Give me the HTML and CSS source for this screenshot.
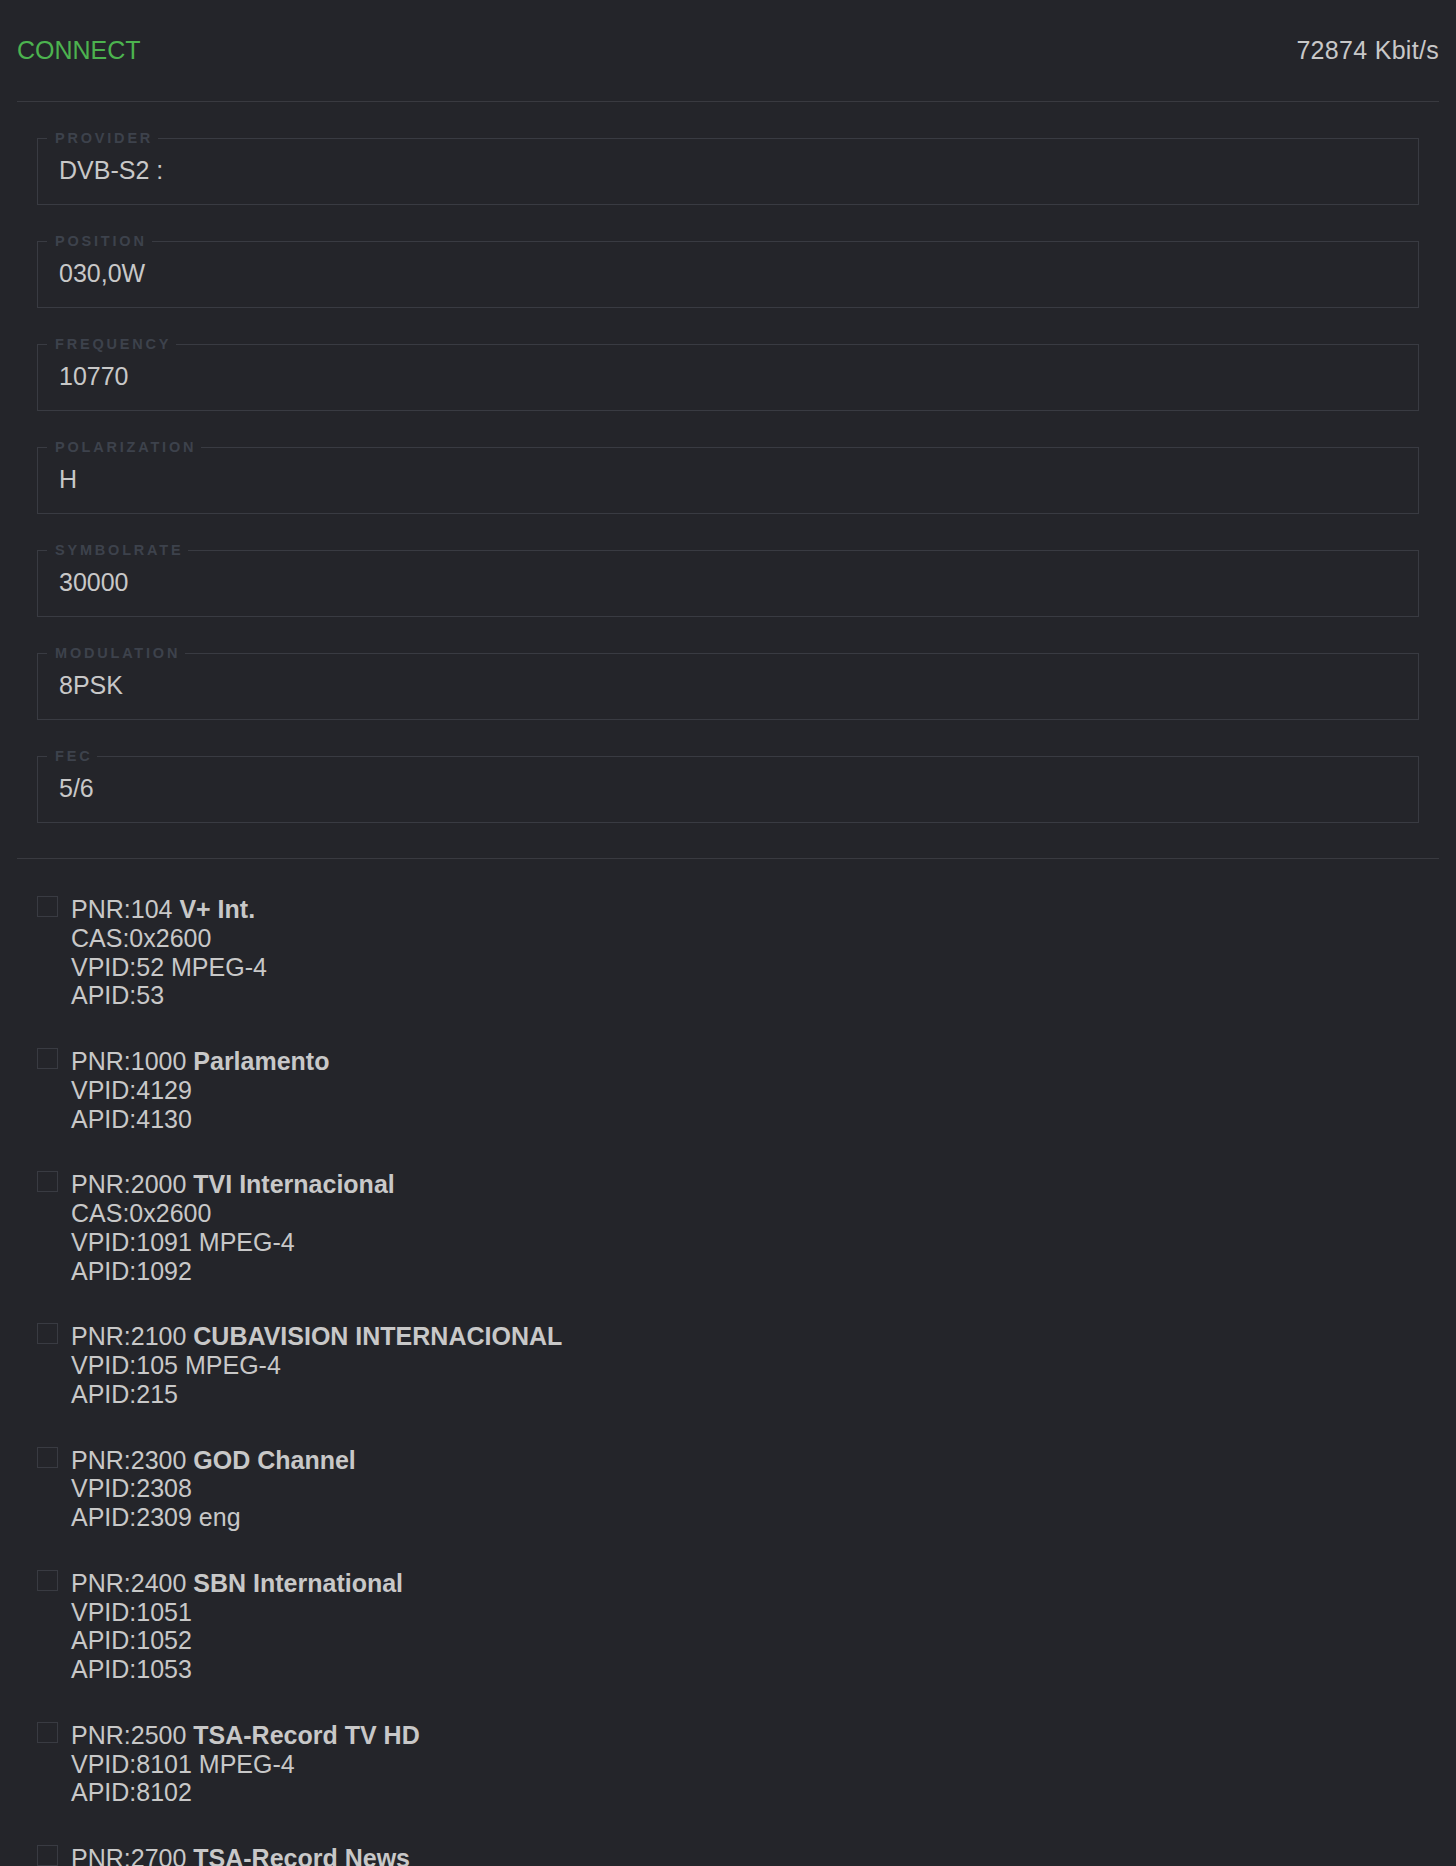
FILE: index.html
```html
<!DOCTYPE html>
<html lang="en">
<head>
    <meta charset="UTF-8">
    <meta name="viewport" content="width=device-width, initial-scale=1.0">
    <title>Transponder</title>
    <link rel="stylesheet" href="styles.css">
</head>
<body>
    <div class="page">
        <div class="header">
            <span class="status">CONNECT</span>
            <span class="rate">72874 Kbit/s</span>
        </div>

        <!-- tuning params -->
        <div class="tuning">
            <fieldset>
                <legend>PROVIDER</legend>
                <div class="value">DVB-S2 :</div>
            </fieldset>
            <fieldset>
                <legend>POSITION</legend>
                <div class="value">030,0W</div>
            </fieldset>
            <fieldset>
                <legend>FREQUENCY</legend>
                <div class="value">10770</div>
            </fieldset>
            <fieldset>
                <legend>POLARIZATION</legend>
                <div class="value">H</div>
            </fieldset>
            <fieldset>
                <legend>SYMBOLRATE</legend>
                <div class="value">30000</div>
            </fieldset>
            <fieldset>
                <legend>MODULATION</legend>
                <div class="value">8PSK</div>
            </fieldset>
            <fieldset>
                <legend>FEC</legend>
                <div class="value">5/6</div>
            </fieldset>
        </div>

        <!-- channels -->
        <ul class="channels">
            <li>
                <span class="check"></span>
                <div class="info">
                    PNR:104 <b>V+ Int.</b><br>
                    CAS:0x2600<br>
                    VPID:52 MPEG-4<br>
                    APID:53
                </div>
            </li>
            <li>
                <span class="check"></span>
                <div class="info">
                    PNR:1000 <b>Parlamento</b><br>
                    VPID:4129<br>
                    APID:4130
                </div>
            </li>
            <li>
                <span class="check"></span>
                <div class="info">
                    PNR:2000 <b>TVI Internacional</b><br>
                    CAS:0x2600<br>
                    VPID:1091 MPEG-4<br>
                    APID:1092
                </div>
            </li>
            <li>
                <span class="check"></span>
                <div class="info">
                    PNR:2100 <b>CUBAVISION INTERNACIONAL</b><br>
                    VPID:105 MPEG-4<br>
                    APID:215
                </div>
            </li>
            <li>
                <span class="check"></span>
                <div class="info">
                    PNR:2300 <b>GOD Channel</b><br>
                    VPID:2308<br>
                    APID:2309 eng
                </div>
            </li>
            <li>
                <span class="check"></span>
                <div class="info">
                    PNR:2400 <b>SBN International</b><br>
                    VPID:1051<br>
                    APID:1052<br>
                    APID:1053
                </div>
            </li>
            <li>
                <span class="check"></span>
                <div class="info">
                    PNR:2500 <b>TSA-Record TV HD</b><br>
                    VPID:8101 MPEG-4<br>
                    APID:8102
                </div>
            </li>
            <li>
                <span class="check"></span>
                <div class="info">
                    PNR:2700 <b>TSA-Record News</b>
                </div>
            </li>
        </ul>
    </div>
</body>
</html>
```

FILE: styles.css
```css
body {
    margin: 0;
    background: #24252a;
    color: #c8c8c8;
    font-family: "Liberation Sans", Arial, Helvetica, sans-serif;
    font-size: 25px;
}

.page {
    padding: 0 17px;
}

.header {
    display: flex;
    justify-content: space-between;
    padding: 36px 0;
    line-height: 29px;
    border-bottom: 1px solid #393a40;
}

.status {
    color: #4cb34f;
}

.rate {
    letter-spacing: 0.3px;
}

.tuning {
    padding: 28px 20px 7px;
    border-bottom: 1px solid #393a40;
}

fieldset {
    margin: 0 0 28px;
    padding: 10px 9px 19px;
    border: 1px solid #393b42;
}

legend {
    padding: 0 5px 0 8px;
    font-size: 14.5px;
    line-height: 16px;
    font-weight: bold;
    letter-spacing: 2.8px;
    color: #3d424c;
}

.value {
    margin-left: 12px;
    line-height: 29px;
}

.channels {
    list-style: none;
    margin: 0;
    padding: 36px 20px;
}

.channels li {
    display: flex;
    gap: 13px;
    margin-bottom: 37px;
    line-height: 1.15;
}

.check {
    flex: none;
    width: 19px;
    height: 19px;
    margin-top: 1px;
    border: 1px solid #393b42;
}

.info b {
    font-weight: bold;
}
```
